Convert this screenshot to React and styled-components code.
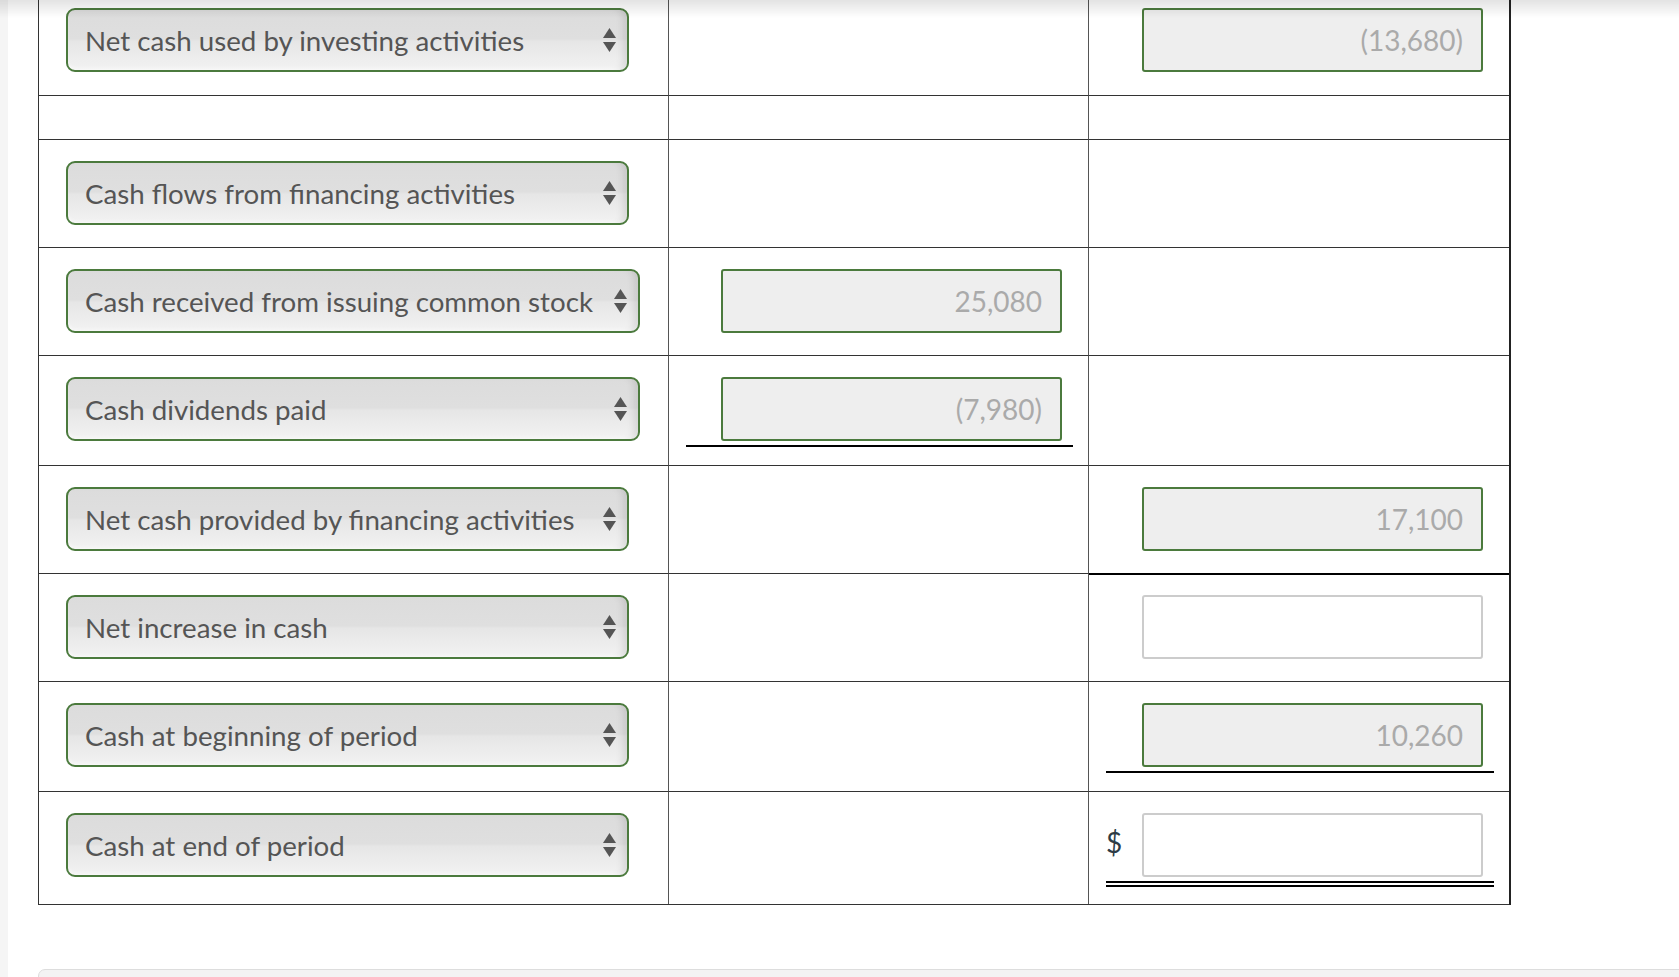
import React from "react";
import styled, { createGlobalStyle } from "styled-components";

const GlobalStyle = createGlobalStyle`
  html, body {
    margin: 0;
    padding: 0;
    background: #fff;
    overflow: hidden;
  }
  body {
    font-family: Lato, "Open Sans", "Liberation Sans", sans-serif;
  }
`;

// one entry per table row, top to bottom
const rows = [
  { h: 109, label: "Net cash used by investing activities", col3: { value: "(13,680)" } },
  { h: 44 },
  { h: 108, label: "Cash flows from financing activities" },
  { h: 108, label: "Cash received from issuing common stock", wide: true, col2: { value: "25,080" } },
  { h: 110, label: "Cash dividends paid", wide: true, col2: { value: "(7,980)", line: "single" } },
  { h: 108, label: "Net cash provided by financing activities", col3: { value: "17,100" } },
  { h: 108, label: "Net increase in cash", col3: { value: "", empty: true }, strong3: true },
  { h: 110, label: "Cash at beginning of period", col3: { value: "10,260", line: "single" } },
  { h: 114, label: "Cash at end of period", col3: { value: "", empty: true, line: "double", dollar: true } },
];

const Arrows = () => (
  <svg width="13" height="25" viewBox="0 0 13 25">
    <polygon points="0,10 6.5,0 13,10" fill="#555" />
    <polygon points="0,14 13,14 6.5,24" fill="#555" />
  </svg>
);

const Answer = ({ data }) => {
  if (!data) return null;
  return (
    <AnswerBox line={data.line}>
      {data.dollar && <Dollar>$</Dollar>}
      <AmountInput readOnly value={data.value} empty={data.empty} />
    </AnswerBox>
  );
};

const App = () => {
  return (
    <>
      <GlobalStyle />
      <TopShade />
      <Page>
        <LeftStrip />
        <Main>
          <Sheet>
            {rows.map((row, i) => (
              <Row key={i} h={row.h} last={i === rows.length - 1}>
                <LabelCell>
                  {row.label && (
                    <Dropdown wide={row.wide}>
                      <span>{row.label}</span>
                      <Arrows />
                    </Dropdown>
                  )}
                </LabelCell>
                <AmountCell mid>
                  <Answer data={row.col2} />
                </AmountCell>
                <AmountCell strong={row.strong3}>
                  <Answer data={row.col3} />
                </AmountCell>
              </Row>
            ))}
          </Sheet>
          <FooterPanel />
        </Main>
      </Page>
    </>
  );
};

const TopShade = styled.div`
  position: fixed;
  top: 0;
  left: 0;
  right: 0;
  height: 18px;
  background: linear-gradient(rgba(0, 0, 0, 0.11), rgba(0, 0, 0, 0));
  pointer-events: none;
  z-index: 5;
`;

const Page = styled.div`
  display: flex;
  height: 977px;
  overflow: hidden;
`;

const LeftStrip = styled.div`
  width: 8px;
  flex-shrink: 0;
  background: #f5f5f5;
`;

const Main = styled.div`
  flex: 1;
  padding-left: 30px;
  margin-top: -14px;
`;

const Sheet = styled.div`
  width: 1473px;
  border-left: 1px solid #333;
  border-right: 2px solid #222;
  box-sizing: border-box;
`;

const Row = styled.div`
  display: grid;
  grid-template-columns: 630px 420px 1fr;
  height: ${(p) => p.h}px;
  box-sizing: border-box;
  border-bottom: ${(p) => (p.last ? "1px solid #333" : "none")};
`;

const LabelCell = styled.div`
  box-sizing: border-box;
  border-top: 1px solid #333;
  border-right: 1px solid #555;
  padding: 21px 0 0 27px;
`;

const AmountCell = styled.div`
  box-sizing: border-box;
  border-top: ${(p) => (p.strong ? "2px solid #000" : "1px solid #333")};
  border-right: ${(p) => (p.mid ? "1px solid #555" : "none")};
  padding: ${(p) => (p.strong ? "20px" : "21px")} 15px 0 17px;
`;

const Dropdown = styled.div`
  display: flex;
  align-items: center;
  justify-content: space-between;
  width: ${(p) => (p.wide ? "574px" : "563px")};
  height: 64px;
  box-sizing: border-box;
  padding: 0 11px 0 17px;
  border: 2px solid #4b7a3d;
  border-radius: 9px;
  background: linear-gradient(#dcdcdc 0%, #dfdfdf 48%, #e6e6e6 52%, #f2f2f2 100%);
  box-shadow: inset -9px 0 8px -6px rgba(0, 0, 0, 0.12),
    inset 0 -3px 4px -2px rgba(255, 255, 255, 0.8);
  color: #555;
  font-size: 27.7px;
  white-space: nowrap;
  cursor: pointer;
`;

const AnswerBox = styled.div`
  display: flex;
  align-items: center;
  padding: 0 11px 4px 0;
  border-bottom: ${(p) =>
    p.line === "double"
      ? "6px double #000"
      : p.line === "single"
      ? "2px solid #000"
      : "none"};
`;

const Dollar = styled.span`
  font-size: 28px;
  color: #2d3b45;
  padding-bottom: 6px;
`;

const AmountInput = styled.input`
  margin-left: auto;
  width: 341px;
  height: 64px;
  box-sizing: border-box;
  padding: 0 18px;
  border: 2px solid ${(p) => (p.empty ? "#ccc" : "#4b7a3d")};
  border-radius: 3px;
  background: ${(p) => (p.empty ? "#fff" : "#eee")};
  color: #aaa;
  font-family: Lato, "Open Sans", "Liberation Sans", sans-serif;
  font-size: 28px;
  text-align: right;
  outline: none;
`;

const FooterPanel = styled.div`
  margin-top: 64px;
  height: 80px;
  margin-right: -10px;
  background: #f3f3f3;
  border: 1px solid #ddd;
  border-radius: 7px 0 0 0;
`;

export default App;
